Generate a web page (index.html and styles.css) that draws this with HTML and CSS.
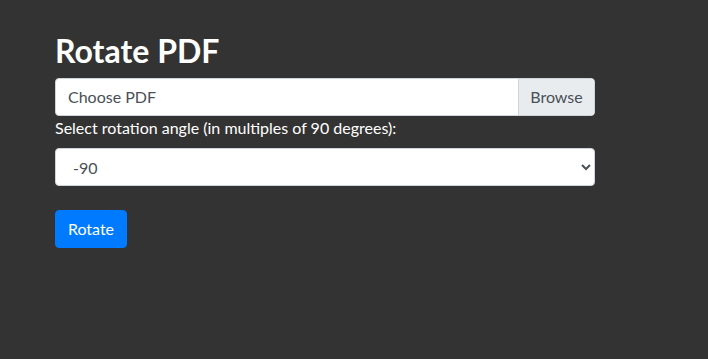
FILE: index.html
```html
<!DOCTYPE html>
<html>
<head>
<meta charset="utf-8">
<link rel="stylesheet" href="styles.css">
</head>
<body>
<div class="container">
  <h2 class="title">Rotate PDF</h2>
  <form class="form">
    <div class="file-row">
      <label class="file-label">
        <span class="file-text">Choose PDF</span>
        <span class="file-btn">Browse</span>
      </label>
    </div>
    <label class="field-label">Select rotation angle (in multiples of 90 degrees):</label>
    <select class="select">
      <option>-90</option>
      <option>90</option>
      <option>180</option>
    </select>
    <button type="button" class="btn">Rotate</button>
  </form>
</div>
</body>
</html>
```
FILE: styles.css
```css
html, body {
  margin: 0;
  padding: 0;
  background: #333333;
  height: 100%;
}
body {
  font-family: Lato, "Noto Sans", sans-serif;
  font-size: 16px;
  line-height: 1.5;
  color: #ffffff;
}
.container {
  width: 540px;
  padding: 32px 0 0 55px;
}
.title {
  margin: 0 0 8px 0;
  font-size: 32px;
  font-weight: 700;
  line-height: 1.2;
  color: #ffffff;
}
.form {
  display: flex;
  flex-direction: column;
}
.file-label {
  display: flex;
  height: 38px;
  box-sizing: border-box;
  border: 1px solid #ced4da;
  border-radius: 4px;
  background: #ffffff;
  overflow: hidden;
  color: #495057;
}
.file-text {
  flex: 1;
  padding: 6px 12px;
  line-height: 24px;
}
.file-btn {
  width: 76px;
  box-sizing: border-box;
  text-align: center;
  padding: 6px 0;
  line-height: 24px;
  background: #e9ecef;
  border-left: 1px solid #ced4da;
}
.field-label {
  display: block;
  margin: 0 0 8px 0;
  line-height: 24px;
}
.select {
  height: 38px;
  box-sizing: border-box;
  padding: 6px 8px 6px 13px;
  font-family: inherit;
  font-size: 16px;
  color: #495057;
  background: #ffffff;
  border: 1px solid #ced4da;
  border-radius: 4px;
  margin-bottom: 24px;
}
.btn {
  align-self: flex-start;
  width: 72px;
  height: 38px;
  padding: 6px 0;
  font-family: inherit;
  font-size: 16px;
  line-height: 24px;
  color: #ffffff;
  background: #007bff;
  border: 1px solid #007bff;
  border-radius: 4px;
}
```
